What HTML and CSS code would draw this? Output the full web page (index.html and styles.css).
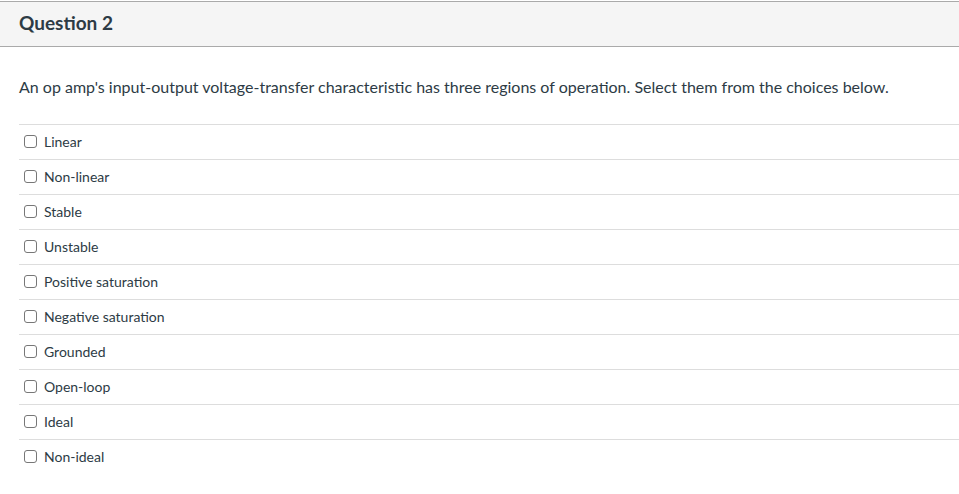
FILE: index.html
```html
<!DOCTYPE html>
<html lang="en">
<head>
    <meta charset="UTF-8">
    <title>Question 2</title>
    <link rel="stylesheet" href="styles.css">
</head>
<body>
    <div class="question">
        <div class="header">
            <h2>Question 2</h2>
        </div>
        <div class="content">
            <p class="text">An op amp's input-output voltage-transfer characteristic has three regions of operation. Select them from the choices below.</p>
            <div class="answers">
                <label class="answer"><span class="box"></span>Linear</label>
                <label class="answer"><span class="box"></span>Non-linear</label>
                <label class="answer"><span class="box"></span>Stable</label>
                <label class="answer"><span class="box"></span>Unstable</label>
                <label class="answer"><span class="box"></span>Positive saturation</label>
                <label class="answer"><span class="box"></span>Negative saturation</label>
                <label class="answer"><span class="box"></span>Grounded</label>
                <label class="answer"><span class="box"></span>Open-loop</label>
                <label class="answer"><span class="box"></span>Ideal</label>
                <label class="answer"><span class="box"></span>Non-ideal</label>
            </div>
        </div>
    </div>
</body>
</html>
```

FILE: styles.css
```css
body {
    font-family: Lato, "Liberation Sans", sans-serif;
    color: #2d3b45;
    background-color: #fff;
    margin: 0;
    padding: 1px 0 0 0;
}

.header {
    background-color: #f5f5f5;
    border-top: 1px solid #aaa;
    border-bottom: 1px solid #aaa;
    height: 44px;
    display: flex;
    align-items: center;
    padding-left: 19px;
}

.header h2 {
    margin: 0 0 4px 0;
    font-size: 19px;
    font-weight: bold;
}

.content {
    padding: 0 0 0 19px;
}

.text {
    font-size: 16px;
    margin: 30px 0 27px 0;
    line-height: 20px;
}

.answer {
    display: flex;
    align-items: center;
    height: 34px;
    border-top: 1px solid #ddd;
    font-size: 14px;
    padding-bottom: 2px;
    box-sizing: border-box;
    height: 35px;
}

.box {
    width: 11px;
    height: 11px;
    border: 1px solid #777;
    border-radius: 3px;
    margin: 0 7px 0 5px;
}
```
